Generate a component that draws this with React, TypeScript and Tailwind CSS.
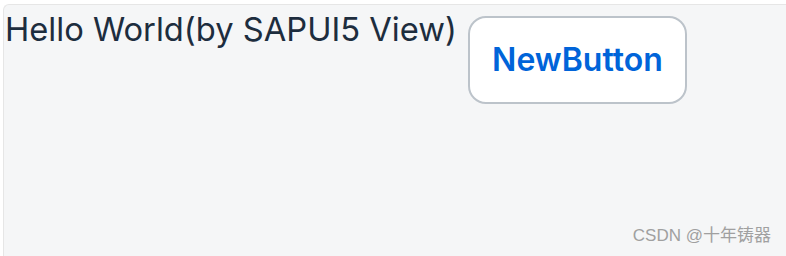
import React from 'react';

export default function App() {
  return (
    <div className="w-[786px] h-[256px] bg-white overflow-hidden relative" style={{ fontFamily: 'Inter, "Noto Sans", sans-serif' }}>
      <div className="ml-[3px] mt-[4px] h-[300px] w-[800px] bg-[#f5f6f7] border-l border-t border-[#e6e6e6] rounded-tl-[6px] flex items-start">
        <span className="ml-[1px] mt-[4px] text-[32.7px] leading-[40px] text-[#1d2d3e]">Hello World(by SAPUI5 View)</span>
        <button className="ml-[11px] mt-[11px] w-[219px] h-[88px] bg-white border-2 border-[#bcc3ca] rounded-[18px] text-[32px] font-semibold text-[#0064d9]">
          NewButton
        </button>
      </div>
      <div className="absolute right-[15px] bottom-[8px] text-[17px] text-[#a0a0a0]" style={{ fontFamily: '"Liberation Sans", "Noto Sans CJK SC", sans-serif' }}>
        CSDN @十年铸器
      </div>
    </div>
  );
}
